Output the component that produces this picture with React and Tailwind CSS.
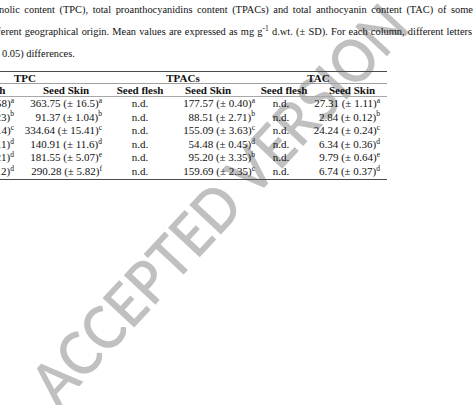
import React from "react";

const col0 = ["12.43 (± 0.58)", "3.12 (± 0.23)", "9.87 (± 0.14)", "2.35 (± 0.11)", "3.02 (± 0.21)", "2.91 (± 0.12)"];
const sup0 = ["a", "b", "c", "d", "d", "d"];
const col1 = ["363.75 (± 16.5)", "91.37 (± 1.04)", "334.64 (± 15.41)", "140.91 (± 11.6)", "181.55 (± 5.07)", "290.28 (± 5.82)"];
const sup1 = ["a", "b", "c", "d", "e", "f"];
const col3 = ["177.57 (± 0.40)", "88.51 (± 2.71)", "155.09 (± 3.63)", "54.48 (± 0.45)", "95.20 (± 3.35)", "159.69 (± 2.35)"];
const sup3 = ["a", "b", "c", "d", "b", "c"];
const col5 = ["27.31 (± 1.11)", "2.84 (± 0.12)", "24.24 (± 0.24)", "6.34 (± 0.36)", "9.79 (± 0.64)", "6.74 (± 0.37)"];
const sup5 = ["a", "b", "c", "d", "e", "d"];

function V({ t, s }) {
  return (
    <>
      {t}
      <sup className="text-[7.5px] top-[-0.55em]">{s}</sup>
    </>
  );
}

export default function App() {
  return (
    <div className="relative w-[474px] h-[405px] overflow-hidden bg-white text-[#111111] [font-family:'Liberation_Serif','Times_New_Roman',serif] text-[11px]">
      {/* watermark */}
      <div className="absolute left-[58px] top-[356px] z-0 origin-[0_53px] rotate-[-47deg] scale-x-[0.9] whitespace-nowrap [font-family:'Lato','Open_Sans',sans-serif] font-semibold text-[60px] leading-[60px] text-[#c0c0c0] select-none">
        ACCEPTED VERSION
      </div>

      <div className="relative z-10">
        <div className="mt-[-1px] h-[22px] leading-[22px] ml-[-16px] w-[489px] text-[10.4px] text-justify [text-align-last:justify]">
          phenolic content (TPC), total proanthocyanidins content (TPACs) and total anthocyanin content (TAC) of some
        </div>
        <div className="h-[22px] leading-[22px] ml-[-14px] w-[486px] text-[10.4px] text-justify [text-align-last:justify]">
          different geographical origin. Mean values are expressed as mg g<sup className="text-[7.5px]">-1</sup> d.wt. (± SD). For each column, different letters
        </div>
        <div className="h-[22px] leading-[22px] pl-[2px] text-[10.4px]">0.05) differences.</div>

        <div className="mt-[5.5px] ml-[-62px] w-[449px]">
          <div className="grid grid-cols-[86px_84px_64px_86px_52px_77px] h-[13px] leading-[13px] font-bold border-t-[1.5px] border-b border-t-[#4a4a4a] border-b-[#a0a0a0]">
            <div className="col-span-2 text-center pl-[4px]">TPC</div>
            <div className="col-span-2 text-center">TPACs</div>
            <div className="col-span-2 text-center pr-[8px]">TAC</div>
          </div>
          <div className="grid grid-cols-[86px_84px_64px_86px_52px_77px] h-[13px] leading-[13px] font-bold border-b border-b-[#a8a8a8]">
            <div className="text-center pl-[2px]">Seed flesh</div>
            <div className="text-center">Seed Skin</div>
            <div className="text-center">Seed flesh</div>
            <div className="text-center pr-[14px]">Seed Skin</div>
            <div className="text-center">Seed flesh</div>
            <div className="text-center pl-[7px]">Seed Skin</div>
          </div>
          <div className="border-b-[1.5px] border-b-[#4a4a4a] pt-[0.5px]">
            {col1.map((v, i) => (
              <div key={i} className="grid grid-cols-[86px_84px_64px_86px_52px_77px] h-[13.6px] leading-[13.6px] whitespace-nowrap">
                <div className="text-right pr-[10px]"><V t={col0[i]} s={sup0[i]} /></div>
                <div className="text-right pr-[6px]"><V t={v} s={sup1[i]} /></div>
                <div className="text-center">n.d.</div>
                <div className="text-right pr-[3px]"><V t={col3[i]} s={sup3[i]} /></div>
                <div className="text-center pr-[6px]">n.d.</div>
                <div className="text-right pr-[7px]"><V t={col5[i]} s={sup5[i]} /></div>
              </div>
            ))}
          </div>
        </div>
      </div>
    </div>
  );
}
